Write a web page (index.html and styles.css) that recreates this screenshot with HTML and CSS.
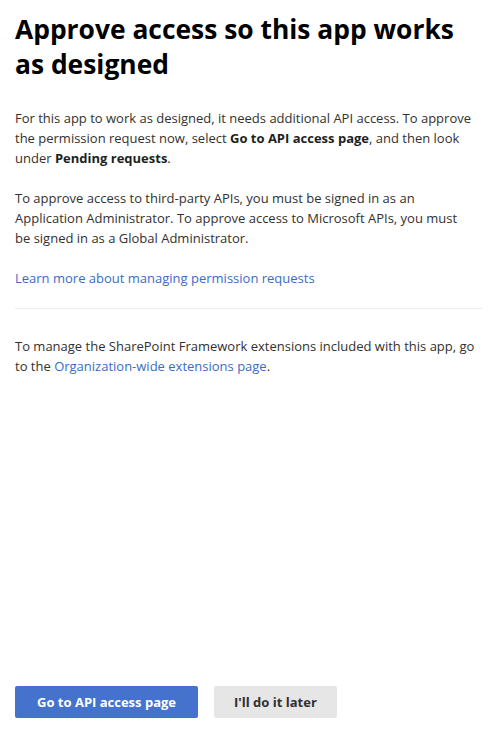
FILE: index.html
```html
<!DOCTYPE html>
<html>
  <head lang="en">
    <meta charset="UTF-8" />
    <title>Approve access</title>
    <link rel="stylesheet" href="styles.css">
  </head>

  <body>
    <div class="panel">
      <div class="panel_body">
        <h1 class="title">Approve access so this app works as designed</h1>
        <p>
          For this app to work as designed, it needs additional API access. To approve
          the permission request now, select <b>Go to API access page</b>, and then look
          under <b>Pending requests</b>.
        </p>
        <p class="narrow">
          To approve access to third-party APIs, you must be signed in as an
          Application Administrator. To approve access to Microsoft APIs, you must
          be signed in as a Global Administrator.
        </p>
        <p><a href="#">Learn more about managing permission requests</a></p>
        <div class="sep"></div>
        <p>
          To manage the SharePoint Framework extensions included with this app, go
          to the <a href="#">Organization-wide extensions page</a>.
        </p>
      </div>
      <div class="panel_foot">
        <button class="btn primary">Go to API access page</button>
        <button class="btn">I'll do it later</button>
      </div>
    </div>
  </body>
</html>
```

FILE: styles.css
```css
html,
body {
  margin: 0;
  padding: 0;
  height: 100%;
}

body {
  font-family: "Open Sans", "Noto Sans", sans-serif;
  font-size: 13px;
  color: #323130;
  background: #fff;
}

.panel {
  height: 100%;
  display: flex;
  flex-direction: column;
  padding: 0 13px 0 15px;
  box-sizing: border-box;
}

.panel_body {
  flex: 1;
}

.title {
  margin: 12px 0 26px;
  font-size: 26.4px;
  line-height: 35px;
  font-weight: 700;
  color: #000;
}

.panel_body p {
  margin: 0 0 20px;
  line-height: 20px;
}

.panel_body p.narrow {
  max-width: 456px;
}

.panel_body b {
  font-weight: 700;
  color: #201f1e;
}

.panel_body a {
  color: #3a6cc6;
  text-decoration: none;
}

.sep {
  height: 1px;
  background: #edebe9;
  margin: 15px 0 27px;
}

.panel_foot {
  display: flex;
  gap: 16px;
  padding-bottom: 11px;
}

.btn {
  height: 32px;
  padding: 0 20px;
  border: 0;
  border-radius: 2px;
  font-family: inherit;
  font-size: 13px;
  font-weight: 700;
  color: #323130;
  background: #e6e6e6;
}

.btn.primary {
  padding: 0 22px;
  color: #fff;
  background: #4472cc;
}
```
